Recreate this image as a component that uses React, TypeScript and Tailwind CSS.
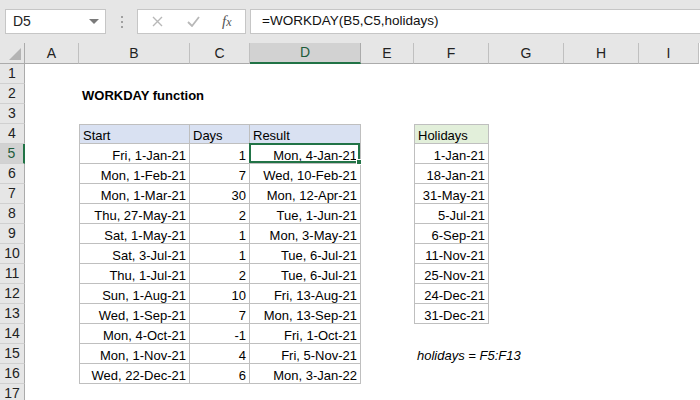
import React from "react";

const colLetters = ["A", "B", "C", "D", "E", "F", "G", "H", "I"];

const startDates = [
  "Fri, 1-Jan-21",
  "Mon, 1-Feb-21",
  "Mon, 1-Mar-21",
  "Thu, 27-May-21",
  "Sat, 1-May-21",
  "Sat, 3-Jul-21",
  "Thu, 1-Jul-21",
  "Sun, 1-Aug-21",
  "Wed, 1-Sep-21",
  "Mon, 4-Oct-21",
  "Mon, 1-Nov-21",
  "Wed, 22-Dec-21",
];
const days = ["1", "7", "30", "2", "1", "1", "2", "10", "7", "-1", "4", "6"];
const results = [
  "Mon, 4-Jan-21",
  "Wed, 10-Feb-21",
  "Mon, 12-Apr-21",
  "Tue, 1-Jun-21",
  "Mon, 3-May-21",
  "Tue, 6-Jul-21",
  "Tue, 6-Jul-21",
  "Fri, 13-Aug-21",
  "Mon, 13-Sep-21",
  "Fri, 1-Oct-21",
  "Fri, 5-Nov-21",
  "Mon, 3-Jan-22",
];
const holidays = [
  "1-Jan-21",
  "18-Jan-21",
  "31-May-21",
  "5-Jul-21",
  "6-Sep-21",
  "11-Nov-21",
  "25-Nov-21",
  "24-Dec-21",
  "31-Dec-21",
];

function Cell({ row, col }: { row: number; col: number }) {
  const inMain = row >= 4 && row <= 16 && col >= 2 && col <= 4;
  const inHol = row >= 4 && row <= 13 && col === 6;

  if (inMain || inHol) {
    const isHeader = row === 4;
    let text = "";
    if (inMain) {
      if (isHeader) text = col === 2 ? "Start" : col === 3 ? "Days" : "Result";
      else {
        const i = row - 5;
        text = col === 2 ? startDates[i] : col === 3 ? days[i] : results[i];
      }
    } else {
      text = isHeader ? "Holidays" : holidays[row - 5];
    }
    const leftEdge = inHol || col === 2;
    const bg = isHeader ? (inHol ? "bg-[#e2efda]" : "bg-[#d9e1f2]") : "bg-white";
    const active = row === 5 && col === 4;
    return (
      <div
        className={[
          "relative flex items-end px-[3px] whitespace-nowrap border-r border-b border-[#bfbfbf] leading-[15px]",
          leftEdge ? "border-l" : "",
          isHeader ? "border-t justify-start" : "justify-end",
          bg,
        ].join(" ")}
      >
        <span>{text}</span>
        {active && (
          <div className="absolute -left-[1px] -top-[1px] right-0 bottom-0 border-2 border-[#217346] z-10">
            <div className="absolute -right-[4px] -bottom-[4px] w-[6px] h-[6px] bg-[#217346] border border-white" />
          </div>
        )}
      </div>
    );
  }

  if (row === 2 && col === 2) {
    return (
      <div className="flex items-end px-[3px] pb-[1px] whitespace-nowrap font-bold leading-[15px]">
        <span>WORKDAY function</span>
      </div>
    );
  }
  if (row === 15 && col === 6) {
    return (
      <div className="flex items-end px-[3px] pb-[1px] whitespace-nowrap italic leading-[15px]">
        <span>holidays = F5:F13</span>
      </div>
    );
  }
  return <div />;
}

export default function App() {
  const rows = Array.from({ length: 17 }, (_, i) => i + 1);
  return (
    <div className="w-[700px] h-[400px] overflow-hidden bg-white font-['Liberation_Sans',Arial,sans-serif] text-[13px] text-black">
      {/* Formula bar */}
      <div className="h-[43px] bg-[#e6e6e6] flex items-start pt-[9px]">
        <div className="ml-[5px] w-[101px] h-[25px] bg-white border border-[#c6c6c6] flex items-center justify-between pl-[7px] pr-[6px]">
          <span className="text-[14px] text-[#222]">D5</span>
          <span className="w-0 h-0 border-l-[5px] border-r-[5px] border-t-[5px] border-l-transparent border-r-transparent border-t-[#7a7a7a]" />
        </div>
        <div className="w-[31px] h-[25px] flex flex-col items-center justify-center gap-[3px]">
          <span className="w-[2px] h-[2px] bg-[#a0a0a0]" />
          <span className="w-[2px] h-[2px] bg-[#a0a0a0]" />
          <span className="w-[2px] h-[2px] bg-[#a0a0a0]" />
        </div>
        <div className="w-[109px] h-[25px] bg-white border border-[#c6c6c6] flex items-center">
          <svg className="ml-[14px]" width="11" height="11" viewBox="0 0 11 11">
            <path d="M1 1 L10 10 M10 1 L1 10" stroke="#b8b8b8" strokeWidth="1.4" fill="none" />
          </svg>
          <svg className="ml-[24px]" width="13" height="11" viewBox="0 0 13 11">
            <path d="M1 6 L5 10 L12 1" stroke="#b8b8b8" strokeWidth="1.8" fill="none" />
          </svg>
          <span className="ml-[22px] font-['Liberation_Serif',serif] italic text-[15px] text-[#555] leading-none">
            f<span className="text-[12px]">x</span>
          </span>
        </div>
        <div className="ml-[4px] flex-1 h-[25px] bg-white border-y border-l border-[#c6c6c6] flex items-center pl-[11px]">
          <span className="text-[13.5px] text-[#111]">=WORKDAY(B5,C5,holidays)</span>
        </div>
      </div>

      {/* Sheet grid */}
      <div className="grid grid-cols-[25px_54px_111px_60px_111px_53px_75px_75px_75px_60px] grid-rows-[21px_repeat(17,20px)]">
        <div className="bg-[#e6e6e6] border-r border-b border-[#ababab] relative">
          <svg className="absolute right-[3px] bottom-[3px]" width="12" height="12" viewBox="0 0 12 12">
            <polygon points="12,0 12,12 0,12" fill="#b4b4b4" />
          </svg>
        </div>
        {colLetters.map((c) =>
          c === "D" ? (
            <div
              key={c}
              className="bg-[#d2d2d2] border-r border-[#ababab] border-b-2 border-b-[#217346] flex items-center justify-center text-[14px] text-[#1d5c3a]"
            >
              {c}
            </div>
          ) : (
            <div
              key={c}
              className="bg-[#e6e6e6] border-r border-[#c0c0c0] border-b border-b-[#ababab] flex items-center justify-center text-[14px] text-[#222]"
            >
              {c}
            </div>
          )
        )}
        {rows.map((r) => (
          <React.Fragment key={r}>
            {r === 5 ? (
              <div className="bg-[#d2d2d2] border-r-2 border-r-[#217346] border-b border-b-[#d0d0d0] flex items-center justify-center text-[14px] text-[#1d5c3a]">
                {r}
              </div>
            ) : (
              <div className="bg-[#e6e6e6] border-r border-r-[#ababab] border-b border-b-[#d0d0d0] flex items-center justify-center text-[14px] text-[#222]">
                {r}
              </div>
            )}
            {colLetters.map((_, ci) => (
              <Cell key={ci} row={r} col={ci + 1} />
            ))}
          </React.Fragment>
        ))}
      </div>
    </div>
  );
}
